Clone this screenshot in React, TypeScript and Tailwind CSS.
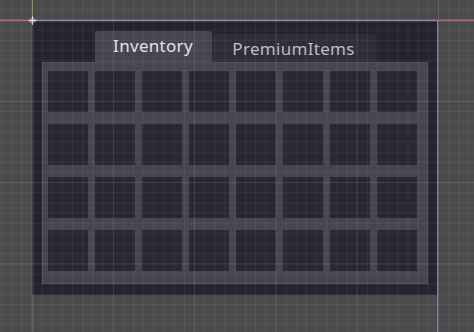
import React from 'react';

const ROWS = 4;
const COLS = 8;

// editor canvas grid: origin at (32, 20), major step ~81.3px, 8 minor steps per major
function CanvasGrid() {
  const minor = 81.3 / 8;
  const lines: React.ReactNode[] = [];
  for (let i = -4; i < 48; i++) {
    const x = 32 + i * minor;
    if (x < 0 || x > 474) continue;
    const major = i % 8 === 0;
    lines.push(
      <line key={'v' + i} x1={x} y1={0} x2={x} y2={332} stroke={major ? 'rgba(255,255,255,0.13)' : 'rgba(255,255,255,0.06)'} strokeWidth={1} />
    );
  }
  for (let j = -2; j < 34; j++) {
    const y = 20 + j * minor;
    if (y < 0 || y > 332) continue;
    const major = j % 8 === 0;
    lines.push(
      <line key={'h' + j} x1={0} y1={y} x2={474} y2={y} stroke={major ? 'rgba(255,255,255,0.13)' : 'rgba(255,255,255,0.06)'} strokeWidth={1} />
    );
  }
  return (
    <svg className="pointer-events-none absolute inset-0" width={474} height={332}>
      {lines}
      {/* axes + viewport rect */}
      <line x1={0} y1={20.5} x2={32} y2={20.5} stroke="#b8687a" strokeWidth={1.5} />
      <line x1={32} y1={20.5} x2={437} y2={20.5} stroke="#9c7ea8" strokeWidth={1.5} />
      <line x1={437} y1={20.5} x2={474} y2={20.5} stroke="#b8687a" strokeWidth={1.5} />
      <line x1={32.5} y1={0} x2={32.5} y2={20} stroke="#7d9a5e" strokeWidth={1} />
      <line x1={33} y1={20} x2={33} y2={332} stroke="rgba(150,190,140,0.25)" strokeWidth={1} />
      <line x1={437.5} y1={20} x2={437.5} y2={332} stroke="#8479b4" strokeWidth={1} />
      {/* origin marker */}
      <circle cx={32.5} cy={20.5} r={3} fill="rgba(255,255,255,0.3)" />
      <line x1={28} y1={20.5} x2={37} y2={20.5} stroke="rgba(255,255,255,0.6)" strokeWidth={1} />
      <line x1={32.5} y1={16} x2={32.5} y2={25} stroke="rgba(255,255,255,0.6)" strokeWidth={1} />
    </svg>
  );
}

export default function App() {
  return (
    <div className="relative w-[474px] h-[332px] overflow-hidden bg-[#4b4b4b] pl-[32px] pt-[20px]" style={{ fontFamily: '"Noto Sans", sans-serif' }}>
      <div className="w-[405px] h-[275px] bg-[#25232d] pt-[11px] pl-[10px]">
        {/* tabs */}
        <div className="w-[386px] flex justify-center items-end h-[31px]">
          <div className="h-[31px] w-[117px] justify-center rounded-t-[3px] bg-[#47454f] flex items-center text-[17px] tracking-[0.3px] leading-none text-[#e4e3e8] pb-[2px]">
            Inventory
          </div>
          <div className="h-[28px] w-[164px] justify-center rounded-t-[3px] bg-[#2f2d37] flex items-center text-[17px] tracking-[0.3px] leading-none text-[#bdbbc6] pt-[1px]">
            PremiumItems
          </div>
        </div>
        {/* tab body with slots */}
        <div className="w-[386px] h-[222px] bg-[#47454f] border border-[#53515c] pl-[5px] pt-[8px]">
          <div className="grid grid-cols-[repeat(8,40px)] grid-rows-[repeat(4,41px)] gap-x-[7px] gap-y-[12px]">
            {Array.from({ length: ROWS * COLS }).map((_, i) => (
              <div key={i} className="bg-[#292730]" />
            ))}
          </div>
        </div>
      </div>
      <CanvasGrid />
    </div>
  );
}
